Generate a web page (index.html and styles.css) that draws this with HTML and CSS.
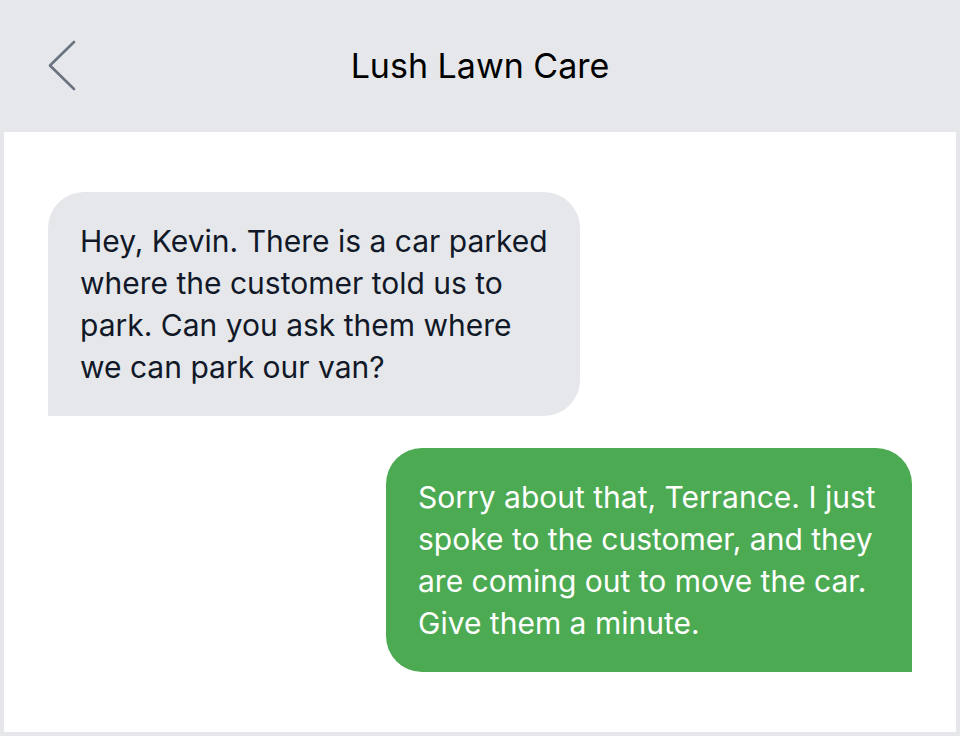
FILE: index.html
```html
<!DOCTYPE html>
<html lang="en">
<head>
<meta charset="utf-8">
<title>Lush Lawn Care</title>
<link rel="stylesheet" href="styles.css">
</head>
<body>
<div class="app">
  <header class="topbar">
    <div class="topbar-left">
      <button class="back" aria-label="Back">
        <svg width="30" height="52" viewBox="0 0 30 52" fill="none" stroke="currentColor" stroke-width="2.6" stroke-linecap="round" stroke-linejoin="round"><path d="M26 3 L2 26.5 L26 50"/></svg>
      </button>
    </div>
    <h1 class="title">Lush Lawn Care</h1>
    <div class="topbar-right"></div>
  </header>
  <main class="chat">
    <div class="bubble incoming">Hey, Kevin. There is a car parked where the customer told us to park. Can you ask them where we can park our van?</div>
    <div class="bubble outgoing">Sorry about that, Terrance. I just spoke to the customer, and they are coming out to move the car. Give them a minute.</div>
  </main>
</div>
</body>
</html>
```
FILE: styles.css
```css
* { box-sizing: border-box; }
html, body { margin: 0; padding: 0; }
body {
  background: #e5e7eb;
  font-family: Inter, "Noto Sans", sans-serif;
  width: 960px;
  height: 736px;
  overflow: hidden;
}
.app {
  display: flex;
  flex-direction: column;
  height: 736px;
}
.topbar {
  height: 132px;
  display: grid;
  grid-template-columns: 1fr auto 1fr;
  align-items: center;
}
.topbar-left {
  display: flex;
  align-items: center;
  padding-left: 48px;
}
.back {
  border: 0;
  background: none;
  padding: 0;
  color: #6b7280;
  display: flex;
  margin-top: -2px;
}
.title {
  margin: 0;
  font-size: 34px;
  font-weight: 400;
  color: #000;
  line-height: 40px;
}
.chat {
  flex: 1;
  margin: 0 4px 4px;
  background: #fff;
  padding: 60px 44px;
  display: flex;
  flex-direction: column;
  gap: 32px;
}
.bubble {
  max-width: 532px;
  padding: 28px 32px;
  font-size: 30px;
  line-height: 42px;
  border-radius: 36px;
}
.incoming {
  align-self: flex-start;
  background: #e5e7eb;
  color: #111827;
  border-bottom-left-radius: 0;
}
.outgoing {
  align-self: flex-end;
  max-width: 526px;
  background: #4caa53;
  color: #fff;
  border-bottom-right-radius: 0;
}
```
